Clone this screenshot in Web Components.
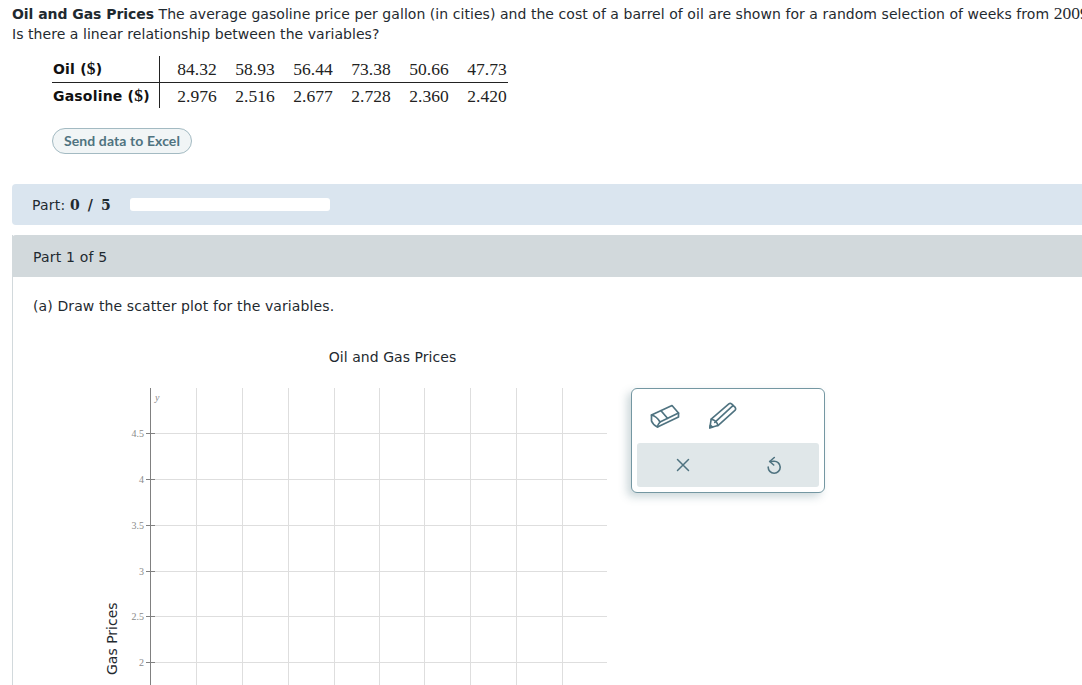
<!DOCTYPE html>
<html>
<head>
<meta charset="utf-8">
<title>Oil and Gas Prices</title>
<style>
    html, body { margin: 0; padding: 0; background: #fff; }
    body { font: 14px/20px "DejaVu Sans", sans-serif; color: #1f2a30; }
    problem-text b { letter-spacing: -.05px; }
    problem-text .year { font: 17.5px/0 "Liberation Serif", serif; }
</style>
</head>
<body>
<problem-page>
    <problem-text>
        <b>Oil and Gas Prices</b> The average gasoline price per gallon (in cities) and the cost of a barrel of oil are shown for a random selection of weeks from <span class="year">2009</span>.
        <br>Is there a linear relationship between the variables?
    </problem-text>
    <data-table></data-table>
    <excel-button>Send data to Excel</excel-button>
    <part-progress done="0" total="5"></part-progress>
    <part-card heading="Part 1 of 5">
        <p>(a) Draw the scatter plot for the variables.</p>
        <graph-area title-text="Oil and Gas Prices"></graph-area>
    </part-card>
</problem-page>

<script>
class ProblemPage extends HTMLElement {
    connectedCallback() {
        this.attachShadow({mode: 'open'});
        this.shadowRoot.innerHTML = `
            <style>
                :host { display: block; width: 1082px; height: 685px; overflow: hidden; }
            </style>
            <slot></slot>
        `;
    }
}

class ProblemText extends HTMLElement {
    connectedCallback() {
        this.attachShadow({mode: 'open'});
        this.shadowRoot.innerHTML = `
            <style>
                :host { display: block; padding: 4px 0 0 12px; white-space: nowrap; overflow: hidden; letter-spacing: .05px; }
            </style>
            <slot></slot>
        `;
    }
}

class DataTable extends HTMLElement {
    connectedCallback() {
        this.attachShadow({mode: 'open'});
        const rows = [
            ['Oil', ['84.32', '58.93', '56.44', '73.38', '50.66', '47.73']],
            ['Gasoline', ['2.976', '2.516', '2.677', '2.728', '2.360', '2.420']]
        ];
        let html = '<table>';
        for (const [name, values] of rows) {
            html += `<tr><th>${name} (<span class="d">$</span>)</th>`;
            html += values.map(v => `<td>${v}</td>`).join('');
            html += '</tr>';
        }
        html += '</table>';
        this.shadowRoot.innerHTML = `
            <style>
                :host { display: block; padding: 12px 0 0 52px; }
                table { border-collapse: collapse; }
                tr { height: 26px; }
                tr:last-child { height: 26px; }
                th {
                    text-align: left;
                    font: bold 14px/20px "DejaVu Sans", sans-serif;
                    letter-spacing: .2px;
                    color: #111;
                    padding: 0 9px 0 1px;
                    box-sizing: border-box;
                    border-right: 1px solid #222;
                    white-space: nowrap;
                }
                tr:first-child th { padding-top: 1px; }
                tr:last-child > * { padding-top: 2px; }
                .d { font-family: "Liberation Serif", serif; font-size: 17.5px; line-height: 0; }
                td {
                    font: 17.5px/20px "Liberation Serif", serif;
                    color: #222;
                    padding: 0 9px;
                    width: 40px;
                }
                th + td { padding-left: 17.5px; }
                td:last-child { padding-right: .5px; }
                tr:first-child > * { border-bottom: 1px solid #222; }
            </style>
            ${html}
        `;
    }
}

class ExcelButton extends HTMLElement {
    connectedCallback() {
        this.attachShadow({mode: 'open'});
        this.shadowRoot.innerHTML = `
            <style>
                :host { display: block; padding: 20px 0 30px 52px; }
                button {
                    display: block;
                    box-sizing: border-box;
                    width: 140px;
                    height: 26px;
                    padding: 0;
                    border: 1px solid #a3bac2;
                    border-radius: 13px;
                    background: #f1f5f6;
                    color: #4f7380;
                    font: bold 14px/24px Lato, sans-serif;
                    letter-spacing: .1px;
                }
            </style>
            <button><slot></slot></button>
        `;
    }
}

class PartProgress extends HTMLElement {
    connectedCallback() {
        this.attachShadow({mode: 'open'});
        const done = this.getAttribute('done');
        const total = this.getAttribute('total');
        this.shadowRoot.innerHTML = `
            <style>
                :host {
                    display: flex;
                    align-items: center;
                    gap: 19px;
                    height: 41px;
                    margin-left: 12px;
                    padding-left: 20px;
                    background: #dae5ef;
                    border-radius: 4px 0 0 4px;
                    color: #1f2a30;
                    letter-spacing: .2px;
                }
                b { font-family: "DejaVu Serif", serif; word-spacing: 2px; letter-spacing: .6px; }
                .bar { width: 200px; height: 13px; background: #fff; border-radius: 3px; }
            </style>
            <span>Part: <b>${done} / ${total}</b></span>
            <div class="bar"></div>
        `;
    }
}

class PartCard extends HTMLElement {
    connectedCallback() {
        this.attachShadow({mode: 'open'});
        this.shadowRoot.innerHTML = `
            <style>
                :host {
                    display: block;
                    margin: 10px 0 0 12px;
                    border-left: 1px solid #d2d9dc;
                }
                header {
                    height: 42px;
                    margin-left: -1px;
                    padding-left: 21px;
                    background: #d2d9dc;
                    border-radius: 4px 0 0 0;
                    line-height: 44px;
                    color: #1f2a30;
                    letter-spacing: .18px;
                }
                .body { padding: 19px 0 0 20px; }
                ::slotted(p) { margin: 0 0 31px 0; letter-spacing: .11px; }
            </style>
            <header>${this.getAttribute('heading')}</header>
            <div class="body"><slot></slot></div>
        `;
    }
}

class GraphArea extends HTMLElement {
    connectedCallback() {
        this.attachShadow({mode: 'open'});
        this.shadowRoot.innerHTML = `
            <style>
                :host { display: block; }
                h3 {
                    margin: 0 0 21px 0;
                    width: 719px;
                    text-align: center;
                    font: 14px/20px "DejaVu Sans", sans-serif;
                    letter-spacing: .05px;
                    color: #1f2a30;
                }
                .row { display: flex; align-items: flex-start; }
            </style>
            <h3>${this.getAttribute('title-text')}</h3>
            <div class="row">
                <scatter-plot></scatter-plot>
                <tool-panel></tool-panel>
            </div>
        `;
    }
}

class ScatterPlot extends HTMLElement {
    connectedCallback() {
        this.attachShadow({mode: 'open'});
        // plot coordinates: svg origin sits at page (33, 388)
        const ox = 33, oy = 388;
        const xs = [196.5, 242.5, 288.5, 334.5, 379.5, 424.5, 470.5, 516.5, 562.5];
        const ys = [[433.5, '4.5'], [479.5, '4'], [525.5, '3.5'], [571.5, '3'], [616.5, '2.5'], [662.5, '2']];
        let g = '';
        for (const x of xs) {
            g += `<line x1="${x - ox}" x2="${x - ox}" y1="0" y2="297" stroke="#dedede"/>`;
        }
        for (const [y, label] of ys) {
            g += `<line x1="${155 - ox}" x2="${607 - ox}" y1="${y - oy}" y2="${y - oy}" stroke="#dedede"/>`;
            g += `<line x1="${146 - ox}" x2="${155 - ox}" y1="${y - oy}" y2="${y - oy}" stroke="#808080"/>`;
            g += `<text x="${144 - ox}" y="${y - oy + 3.5}" text-anchor="end" class="tick">${label}</text>`;
        }
        this.shadowRoot.innerHTML = `
            <style>
                :host { display: block; width: 598px; height: 297px; flex: none; }
                svg { display: block; }
                .tick { font: 10px "Liberation Serif", serif; fill: #8a8a8a; }
                .var { font: italic 10px "Liberation Serif", serif; fill: #8a8a8a; }
                .axis-name { font: 14px "DejaVu Sans", sans-serif; fill: #1f2a30; }
            </style>
            <svg width="598" height="297">
                ${g}
                <line x1="${150.5 - ox}" x2="${150.5 - ox}" y1="0" y2="297" stroke="#808080"/>
                <text x="${155 - ox}" y="13" class="var">y</text>
                <text transform="translate(${117 - ox} ${675 - oy}) rotate(-90)" class="axis-name">Gas Prices</text>
            </svg>
        `;
    }
}

class ToolPanel extends HTMLElement {
    connectedCallback() {
        this.attachShadow({mode: 'open'});
        this.shadowRoot.innerHTML = `
            <style>
                :host {
                    display: block;
                    box-sizing: border-box;
                    width: 194px;
                    height: 105px;
                    flex: none;
                    padding: 0 5px 5px 5px;
                    background: #fff;
                    border: 1px solid #7497a2;
                    border-radius: 6px;
                    box-shadow: -4px 4px 8px rgba(90, 125, 135, .3);
                }
                .top { display: flex; align-items: center; gap: 28px; height: 54px; padding-left: 13px; }
                .bottom {
                    display: grid;
                    grid-template-columns: 91px 91px;
                    height: 44px;
                    background: #e0e7e9;
                    border-radius: 3px;
                }
                .cell { display: flex; align-items: center; justify-content: center; }
                svg { display: block; fill: none; stroke: #4f7380; stroke-linejoin: round; stroke-linecap: round; }
            </style>
            <div class="top">
                <svg width="30" height="25" viewBox="0 0 30 25" stroke-width="1.7">
                    <path d="M1.5 11 L22 1.5 L28.5 9 L28.5 13 L7.5 23 Q3 21 1.5 17 Z"/>
                    <path d="M1.5 11 Q7 12.5 10 18 L28.5 9"/>
                    <path d="M10 18 Q8 20 7.5 23"/>
                    <path d="M11 6.7 L17.5 14.3"/>
                </svg>
                <svg width="29" height="29" viewBox="0 0 32 32" stroke-width="1.8">
                    <path d="M3.5 19 L23 2 Q24.5 1 26 2 L30 6 Q31 7.5 30 9 L11 26 L2 28.5 Z"/>
                    <path d="M3.5 19 Q9.5 20 11 26"/>
                    <path d="M7.5 22.5 L27.5 4"/>
                    <path d="M2.6 25.6 L2 28.5 L5 27.7 Z" fill="#4f7380"/>
                </svg>
            </div>
            <div class="bottom">
                <div class="cell">
                    <svg width="14" height="14" viewBox="0 0 14 14" stroke-width="1.5">
                        <path d="M1.5 1.5 L12.5 12.5 M12.5 1.5 L1.5 12.5"/>
                    </svg>
                </div>
                <div class="cell">
                    <svg width="14" height="18" viewBox="0 0 14 18" stroke-width="1.6">
                        <path d="M7.3 1.5 L2.7 5.5 L6.7 9"/>
                        <path d="M2.7 5.5 L7 5.2 A6 6 0 1 1 1.2 11"/>
                    </svg>
                </div>
            </div>
        `;
    }
}

customElements.define('problem-page', ProblemPage);
customElements.define('problem-text', ProblemText);
customElements.define('data-table', DataTable);
customElements.define('excel-button', ExcelButton);
customElements.define('part-progress', PartProgress);
customElements.define('part-card', PartCard);
customElements.define('graph-area', GraphArea);
customElements.define('scatter-plot', ScatterPlot);
customElements.define('tool-panel', ToolPanel);
</script>
</body>
</html>
